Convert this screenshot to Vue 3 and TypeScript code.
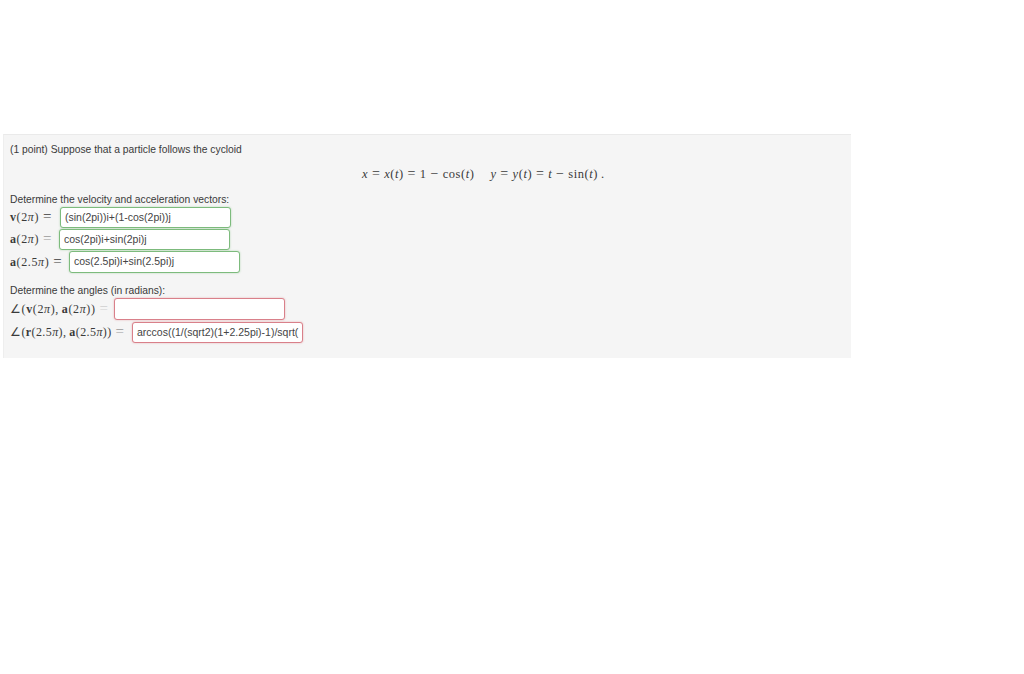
<script setup lang="ts">
</script>

<template>
  <div class="page">
    <section class="panel">
      <p class="intro">(1 point) Suppose that a particle follows the cycloid</p>
      <div class="display">
        <span class="eq"><i>x</i><em>=</em><i>x</i>(<i>t</i>)<em>=</em>1<em>−</em>cos(<i>t</i>)</span><span class="eq"><i>y</i><em>=</em><i>y</i>(<i>t</i>)<em>=</em><i>t</i><em>−</em>sin(<i>t</i>)<span class="dot">.</span></span>
      </div>
      <p class="head">Determine the velocity and acceleration vectors:</p>
      <div class="row r1"><span class="m m1"><b>v</b>(2<i>π</i>)<em>=</em></span><span class="ans ok">(sin(2pi))i+(1-cos(2pi))j</span></div>
      <div class="row r2"><span class="m m2"><b>a</b>(2<i>π</i>)<em class="pale">=</em></span><span class="ans ok">cos(2pi)i+sin(2pi)j</span></div>
      <div class="row r3"><span class="m m3"><b>a</b>(2.5<i>π</i>)<em>=</em></span><span class="ans ok">cos(2.5pi)i+sin(2.5pi)j</span></div>
      <p class="head second">Determine the angles (in radians):</p>
      <div class="row r4"><span class="m m4">∠(<b>v</b>(2<i>π</i>),<b class="gap">a</b>(2<i>π</i>))<em class="paler">=</em></span><span class="ans bad"></span></div>
      <div class="row r5"><span class="m m5">∠(<b>r</b>(2.5<i>π</i>),<b class="gap">a</b>(2.5<i>π</i>))<em class="pale">=</em></span><span class="ans bad">arccos((1/(sqrt2)(1+2.25pi)-1)/sqrt(</span></div>
    </section>
  </div>
</template>

<style scoped>
.page {
  width: 1024px;
  height: 674px;
  padding: 134px 173px 0 3px;
  box-sizing: border-box;
  background: #fff;
  font-family: "Liberation Sans", Arial, sans-serif;
  font-size: 10.3px;
  color: #3a3a3a;
}
.panel {
  height: 224px;
  box-sizing: border-box;
  padding: 8px 6px 0;
  background: #f5f5f5;
  border-top: 1px solid #eaeaea;
  border-left: 1px solid #eeeeee;
}
p { margin: 0; line-height: 13px; }
em { font-style: normal; margin: 0 3.8px; }
.display {
  margin-top: 11px;
  height: 13px;
  line-height: 13px;
  padding-left: 352px;
  font-family: "Liberation Serif", serif;
  font-size: 12.5px;
  letter-spacing: .55px;
  white-space: nowrap;
}
.display em { font-size: 14px; line-height: 13px; }
.dot { margin-left: 3px; }
.eq + .eq { margin-left: 16px; }
.head { margin-top: 13px; }
.head.second { margin-top: 11px; }
.row { display: flex; align-items: center; white-space: nowrap; }
.m {
  font-family: "Liberation Serif", serif;
  font-size: 12px;
  letter-spacing: .6px;
  color: #3a3a3a;
}
.m em { margin: 0 0 0 4px; font-size: 15px; line-height: 13px; }
.gap { margin-left: 3px; }
.pale { color: #9a9a9a; }
.paler { color: #d0d0d0; }
.m1 { width: 50px; }
.m2 { width: 49px; }
.m3 { width: 59px; }
.m4 { width: 104px; }
.m5 { width: 122px; letter-spacing: .4px; }
.ans {
  display: block;
  box-sizing: border-box;
  width: 171px;
  height: 21px;
  line-height: 19px;
  padding: 0 4px;
  background: #fff;
  border: 1px solid;
  border-radius: 3px;
  overflow: hidden;
  font-size: 10.5px;
  color: #444;
}
.ok { border-color: #7dbb7d; box-shadow: 0 0 2px rgba(90, 170, 90, .45); }
.bad { border-color: #d9808a; box-shadow: 0 0 2px rgba(210, 90, 100, .45); }
.r1 { margin-top: 1px; height: 21px; }
.r2 { height: 21px; margin-top: 1px; }
.r3 { height: 22px; margin-top: 1px; }
.r3 .ans { height: 22px; }
.r4 { height: 22px; margin-top: 1px; }
.r4 .ans { height: 22px; }
.r5 { height: 21px; margin-top: 2px; }
</style>
